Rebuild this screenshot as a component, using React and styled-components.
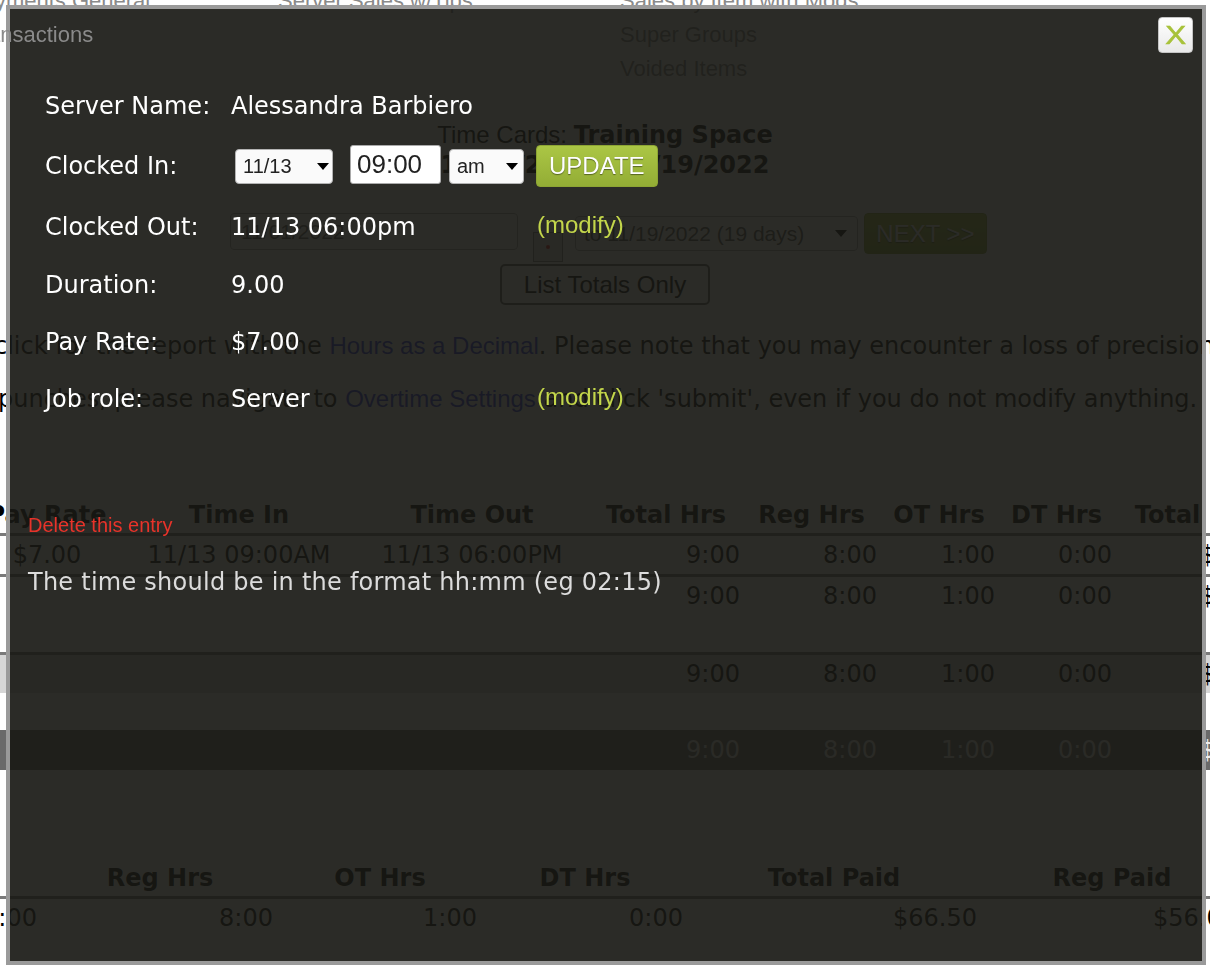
import React from 'react';
import styled, { createGlobalStyle } from 'styled-components';

const Global = createGlobalStyle`
  html, body { margin: 0; padding: 0; background: #fff; overflow: hidden; }
  #root { width: 1210px; height: 970px; overflow: hidden; position: relative; }
`;

const VERDANA = '"DejaVu Sans", Verdana, sans-serif';
const ARIAL = '"Liberation Sans", Arial, sans-serif';

/* ---------- underlying page ---------- */
const Page = styled.div`
  width: 1210px;
  margin-top: -16px;
  font-family: ${VERDANA};
  color: #000;
`;

const LinkGrid = styled.div`
  display: grid;
  grid-template-columns: 310px 342px auto;
  grid-auto-rows: 34px;
  margin-left: -32px;
  font-family: ${ARIAL};
  font-size: 22px;
  line-height: 34px;
`;

const NavLink = styled.a`
  color: #8a8a8a;
  text-decoration: none;
  white-space: nowrap;
  ${(p) => p.$raised && 'position: relative; z-index: 20;'}
`;

const Title = styled.div`
  margin-top: 34px;
  text-align: center;
  font-size: 24px;
  line-height: 30px;
`;

const TitleLabel = styled.span`
  font-family: ${ARIAL};
`;

const TitleStrong = styled.span`
  font-weight: bold;
`;

const Controls = styled.div`
  margin-top: 33px;
  height: 41px;
  display: flex;
  align-items: center;
  padding-left: 230px;
  font-family: ${ARIAL};
  font-size: 21px;
  white-space: nowrap;
`;

const DateField = styled.div`
  box-sizing: border-box;
  width: 288px;
  height: 37px;
  border: 1px solid #aaa;
  border-radius: 4px;
  padding-left: 10px;
  line-height: 35px;
  color: #666;
  align-self: flex-start;
`;

const CalButton = styled.div`
  box-sizing: border-box;
  width: 30px;
  height: 30px;
  margin-left: 15px;
  border: 1px solid #888;
  background: #e4e4e4;
  display: flex;
  align-items: center;
  justify-content: center;
  align-self: flex-end;
  margin-bottom: -8px;
`;

const CalDot = styled.span`
  width: 4px;
  height: 4px;
  background: #d22;
  border-radius: 50%;
`;

const RangeSelect = styled.div`
  box-sizing: border-box;
  width: 283px;
  height: 35px;
  margin-left: 12px;
  border: 1px solid #aaa;
  border-radius: 4px;
  padding-left: 8px;
  line-height: 33px;
  color: #555;
  display: flex;
  justify-content: space-between;
  align-items: center;
  overflow: hidden;
`;

const Caret = styled.span`
  flex: none;
  width: 0;
  height: 0;
  border-left: 6px solid transparent;
  border-right: 6px solid transparent;
  border-top: 7px solid #000;
  margin-right: ${(p) => p.$right || 10}px;
`;

const GreenButton = styled.button`
  box-sizing: border-box;
  height: ${(p) => p.$h || 42}px;
  padding: 0 ${(p) => p.$px || 12}px;
  border: 1px solid #8da533;
  border-radius: 4px;
  background: linear-gradient(#abc645, #93ad35);
  color: #fff;
  font-family: ${ARIAL};
  font-size: 24px;
  white-space: nowrap;
  text-shadow: 0 1px 1px rgba(0, 0, 0, 0.45);
  cursor: pointer;
`;

const NextButton = styled(GreenButton)`
  margin-left: 6px;
  width: 123px;
  padding: 0;
`;

const TotalsRow = styled.div`
  margin-top: 10px;
  display: flex;
  justify-content: center;
`;

const PlainButton = styled.button`
  width: 210px;
  height: 41px;
  border: 2px solid #666;
  border-radius: 5px;
  background: #f6f6f6;
  font-family: ${ARIAL};
  font-size: 24px;
  color: #000;
`;

const Para = styled.p`
  margin: ${(p) => p.$top}px 0 0 ${(p) => p.$left}px;
  white-space: nowrap;
  font-size: 24px;
  line-height: 28px;
`;

const TextLink = styled.a`
  font-family: ${ARIAL};
  color: #2a36e8;
  text-decoration: none;
`;

const Table = styled.div`
  --cols: ${(p) => p.$cols};
  margin: ${(p) => p.$top}px 0 0 ${(p) => p.$left}px;
  width: max-content;
  font-size: 24px;
`;

const TRow = styled.div`
  display: grid;
  grid-template-columns: var(--cols);
  align-items: center;
  height: ${(p) => p.$h || 38}px;
  ${(p) => p.$rule && 'border-bottom: 3px solid #7a7a7a;'}
  ${(p) => p.$tone === 'light' && 'background: #d6d6d6;'}
  ${(p) => p.$tone === 'dark' && 'background: #6a6a6a; color: #eee;'}
`;

const Th = styled.div`
  font-weight: bold;
  text-align: center;
  white-space: nowrap;
`;

const Td = styled.div`
  white-space: nowrap;
  text-align: ${(p) => p.$align || 'right'};
  padding-right: ${(p) => (p.$align === 'center' ? 0 : p.$pad ?? 3)}px;
`;

/* ---------- modal ---------- */
const Modal = styled.div`
  position: fixed;
  left: 6px;
  top: 5px;
  width: 1200px;
  height: 960px;
  box-sizing: border-box;
  border: 4px solid #9a9a9a;
  background: rgba(24, 24, 20, 0.917);
  z-index: 10;
  padding: 8px 9px 0 18px;
  display: flex;
  flex-direction: column;
  font-family: ${VERDANA};
  color: #fff;
`;

const ModalHead = styled.div`
  display: flex;
  justify-content: flex-end;
`;

const CloseButton = styled.button`
  box-sizing: border-box;
  width: 35px;
  height: 36px;
  padding: 0;
  border: 1px solid #c4c4c4;
  border-radius: 4px;
  background: linear-gradient(#ffffff, #e9e9e9);
  display: flex;
  align-items: center;
  justify-content: center;
  cursor: pointer;
`;

const CloseGlyph = styled.span`
  font-family: ${ARIAL};
  font-size: 26px;
  line-height: 1;
  color: #a8c23a;
  -webkit-text-stroke: 0.6px #a8c23a;
  transform: scaleX(1.2);
`;

const Form = styled.div`
  margin: 25px 0 0 17px;
  display: flex;
  flex-direction: column;
`;

const FormRow = styled.div`
  display: grid;
  grid-template-columns: 186px 306px auto;
  align-items: center;
  height: ${(p) => p.$h}px;
  font-size: 24px;
  white-space: nowrap;
`;

const Label = styled.div``;
const Value = styled.div``;

const Modify = styled.a`
  font-family: ${ARIAL};
  font-size: 24px;
  color: #c3d64b;
  text-decoration: none;
  margin-top: -4px;
`;

const InlineControls = styled.div`
  grid-column: 2 / 4;
  display: flex;
  align-items: center;
  margin-left: 4px;
`;

const SelectWrap = styled.div`
  position: relative;
  margin-right: ${(p) => p.$gap}px;
  &::after {
    content: '';
    position: absolute;
    right: ${(p) => p.$arrow}px;
    top: 14px;
    border-left: 6px solid transparent;
    border-right: 6px solid transparent;
    border-top: 7px solid #000;
    pointer-events: none;
  }
`;

const Select = styled.select`
  appearance: none;
  box-sizing: border-box;
  width: ${(p) => p.$w}px;
  height: 35px;
  padding: 0 0 0 7px;
  border: 1px solid #b3b3b3;
  border-radius: 4px;
  background: #fafafa;
  font-family: ${ARIAL};
  font-size: 20px;
  color: #222;
  outline: none;
`;

const TimeInput = styled.input`
  box-sizing: border-box;
  width: 91px;
  height: 39px;
  margin-right: 8px;
  margin-top: -4px;
  padding: 0 0 0 6px;
  border: 1px solid #aaa;
  border-radius: 3px;
  background: #fff;
  font-family: ${ARIAL};
  font-size: 26px;
  color: #222;
  outline: none;
`;

const DeleteLink = styled.a`
  margin-top: 87px;
  font-family: ${ARIAL};
  font-size: 20px;
  line-height: 23px;
  color: #e8332a;
  text-decoration: none;
  align-self: flex-start;
`;

const ErrorText = styled.div`
  margin-top: 31px;
  font-size: 24px;
  line-height: 28px;
  letter-spacing: 0.25px;
  color: #dcdcdc;
`;

const T1 = '152px 232px 234px 154px 137px 118px 117px 172px';
const T2 = '271px 236px 204px 206px 292px 264px';

const hours = ['9:00', '8:00', '1:00', '0:00', '$66.50'];

function HourCells() {
  return hours.map((h) => <Td key={h}>{h}</Td>);
}

export default function App() {
  return (
    <>
      <Global />
      <Page>
        <LinkGrid>
          <NavLink>Payments General</NavLink>
          <NavLink>Server Sales w/Tips</NavLink>
          <NavLink>Sales by Item with Mods</NavLink>
          <NavLink $raised>Transactions</NavLink>
          <span />
          <NavLink>Super Groups</NavLink>
          <span />
          <span />
          <NavLink>Voided Items</NavLink>
        </LinkGrid>

        <Title>
          <TitleLabel>Time Cards: </TitleLabel>
          <TitleStrong>Training Space</TitleStrong>
          <br />
          <TitleStrong>11/01/2022 - 11/19/2022</TitleStrong>
        </Title>

        <Controls>
          <DateField>11/01/2022</DateField>
          <CalButton>
            <CalDot />
          </CalButton>
          <RangeSelect>
            to 11/19/2022 (19 days)
            <Caret $right={10} />
          </RangeSelect>
          <NextButton $h={41}>NEXT &gt;&gt;</NextButton>
        </Controls>

        <TotalsRow>
          <PlainButton>List Totals Only</PlainButton>
        </TotalsRow>

        <Para $top={27} $left={-6}>
          click for the report with the <TextLink>Hours as a Decimal</TextLink>. Please note that you may
          encounter a loss of precision when rounding.
        </Para>
        <Para $top={25} $left={-2}>
          punches, please navigate to <TextLink>Overtime Settings</TextLink> and click 'submit', even if you do
          not modify anything.
        </Para>

        <Table $cols={T1} $top={83} $left={-29}>
          <TRow $h={37} $rule>
            <Th>Pay Rate</Th>
            <Th>Time In</Th>
            <Th>Time Out</Th>
            <Th>Total Hrs</Th>
            <Th>Reg Hrs</Th>
            <Th>OT Hrs</Th>
            <Th>DT Hrs</Th>
            <Th>Total Paid</Th>
          </TRow>
          <TRow $rule>
            <Td $align="center">$7.00</Td>
            <Td $align="center">11/13 09:00AM</Td>
            <Td $align="center">11/13 06:00PM</Td>
            <HourCells />
          </TRow>
          <TRow>
            <span />
            <span />
            <span />
            <HourCells />
          </TRow>
          <TRow $h={37} $rule />
          <TRow $tone="light">
            <span />
            <span />
            <span />
            <HourCells />
          </TRow>
          <TRow $h={37} />
          <TRow $h={40} $tone="dark">
            <span />
            <span />
            <span />
            <HourCells />
          </TRow>
        </Table>

        <Table $cols={T2} $top={89} $left={-229}>
          <TRow $h={37} $rule>
            <Th>Total Hrs</Th>
            <Th>Reg Hrs</Th>
            <Th>OT Hrs</Th>
            <Th>DT Hrs</Th>
            <Th>Total Paid</Th>
            <Th>Reg Paid</Th>
          </TRow>
          <TRow>
            <Td $pad={5}>9:00</Td>
            <Td $pad={5}>8:00</Td>
            <Td $pad={5}>1:00</Td>
            <Td $pad={5}>0:00</Td>
            <Td $pad={3}>$66.50</Td>
            <Td $pad={7}>$56.00</Td>
          </TRow>
        </Table>
      </Page>

      <Modal>
        <ModalHead>
          <CloseButton aria-label="Close">
            <CloseGlyph>X</CloseGlyph>
          </CloseButton>
        </ModalHead>

        <Form>
          <FormRow $h={56}>
            <Label>Server Name:</Label>
            <Value>Alessandra Barbiero</Value>
          </FormRow>
          <FormRow $h={64}>
            <Label>Clocked In:</Label>
            <InlineControls>
              <SelectWrap $gap={17} $arrow={4}>
                <Select $w={98} defaultValue="11/13">
                  <option>11/13</option>
                </Select>
              </SelectWrap>
              <TimeInput defaultValue="09:00" />
              <SelectWrap $gap={12} $arrow={6}>
                <Select $w={75} defaultValue="am">
                  <option>am</option>
                  <option>pm</option>
                </Select>
              </SelectWrap>
              <GreenButton $h={42} $px={12}>UPDATE</GreenButton>
            </InlineControls>
          </FormRow>
          <FormRow $h={58}>
            <Label>Clocked Out:</Label>
            <Value>11/13 06:00pm</Value>
            <Modify>(modify)</Modify>
          </FormRow>
          <FormRow $h={57}>
            <Label>Duration:</Label>
            <Value>9.00</Value>
          </FormRow>
          <FormRow $h={57}>
            <Label>Pay Rate:</Label>
            <Value>$7.00</Value>
          </FormRow>
          <FormRow $h={57}>
            <Label>Job role:</Label>
            <Value>Server</Value>
            <Modify>(modify)</Modify>
          </FormRow>
        </Form>

        <DeleteLink>Delete this entry</DeleteLink>
        <ErrorText>The time should be in the format hh:mm (eg 02:15)</ErrorText>
      </Modal>
    </>
  );
}
